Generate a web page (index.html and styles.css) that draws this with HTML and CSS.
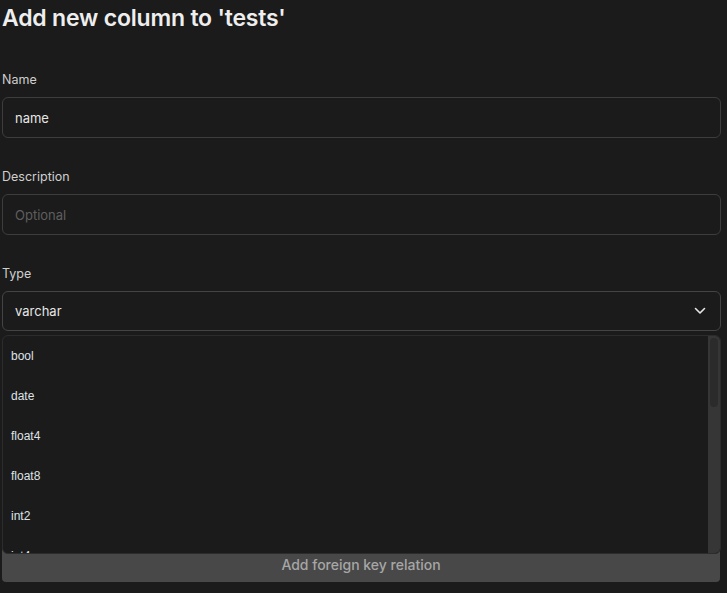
FILE: index.html
```html
<!DOCTYPE html>
<html>
<head>
<meta charset="utf-8">
<link rel="stylesheet" href="styles.css">
</head>
<body>
<div class="panel">
  <h1 class="title">Add new column to 'tests'</h1>
  <div class="form">
    <div class="field">
      <label class="label">Name</label>
      <div class="input">name</div>
    </div>
    <div class="field">
      <label class="label">Description</label>
      <div class="input placeholder">Optional</div>
    </div>
    <div class="field type-field">
      <label class="label">Type</label>
      <div class="input select">
        <span>varchar</span>
        <svg class="chev" width="12" height="8" viewBox="0 0 12 8"><path d="M1.5 1.5 L6 6 L10.5 1.5" fill="none" stroke="#e6e6e6" stroke-width="1.6" stroke-linecap="round" stroke-linejoin="round"/></svg>
      </div>
      <div class="dropdown">
        <ul class="options">
          <li>bool</li>
          <li>date</li>
          <li>float4</li>
          <li>float8</li>
          <li>int2</li>
          <li>int4</li>
        </ul>
        <div class="scrollbar"><div class="thumb"></div></div>
      </div>
    </div>
    <button class="fk-btn">Add foreign key relation</button>
  </div>
</div>
</body>
</html>
```
FILE: styles.css
```css
html, body {
  margin: 0;
  padding: 0;
  background: #1b1b1b;
}
body {
  font-family: Inter, "Noto Sans", sans-serif;
  color: #e4e4e4;
  min-height: 593px;
}
.panel {
  width: 719px;
  margin-left: 2px;
}
.title {
  margin: 0;
  font-size: 23px;
  line-height: 36px;
  font-weight: 600;
  color: #eeeeee;
  letter-spacing: -0.2px;
}
.form {
  display: flex;
  flex-direction: column;
  gap: 29px;
  margin-top: 34px;
}
.field {
  display: flex;
  flex-direction: column;
  gap: 9px;
}
.type-field {
  position: relative;
  z-index: 2;
}
.label {
  font-size: 12.5px;
  line-height: 16px;
  padding-top: 2px;
  color: #cfcfcf;
}
.input {
  box-sizing: border-box;
  height: 41px;
  border: 1px solid #3d3d3d;
  border-radius: 6px;
  padding: 0 12px;
  display: flex;
  align-items: center;
  font-size: 13px;
  color: #e6e6e6;
}
.placeholder {
  color: #5e5e5e;
}
.select {
  height: 40px;
  justify-content: space-between;
  border-color: #444444;
}
.chev {
  margin-right: 2px;
}
.dropdown {
  position: absolute;
  left: 0;
  right: 0;
  top: 71px;
  height: 219px;
  box-sizing: border-box;
  border: 1px solid #2c2c2c;
  border-radius: 6px;
  background: #1b1b1b;
  overflow: hidden;
}
.options {
  list-style: none;
  margin: 0;
  padding: 0;
}
.options li {
  height: 40px;
  display: flex;
  align-items: center;
  padding-left: 8px;
  font-family: "Liberation Sans", Arial, sans-serif;
  font-size: 12px;
  color: #dfe3e8;
}
.scrollbar {
  position: absolute;
  top: 0;
  right: 0;
  width: 12px;
  bottom: 0;
  background: #363636;
}
.thumb {
  position: absolute;
  left: 2px;
  right: 2px;
  top: 2px;
  height: 69px;
  border-radius: 4px;
  background: #2b2b2b;
}
.fk-btn {
  margin-top: 187px;
  height: 35px;
  border: none;
  border-radius: 4px;
  background: #484848;
  color: #a6a6a6;
  font-family: Inter, "Noto Sans", sans-serif;
  font-size: 14px;
  font-weight: 500;
  padding: 0;
  width: 718px;
}
```
